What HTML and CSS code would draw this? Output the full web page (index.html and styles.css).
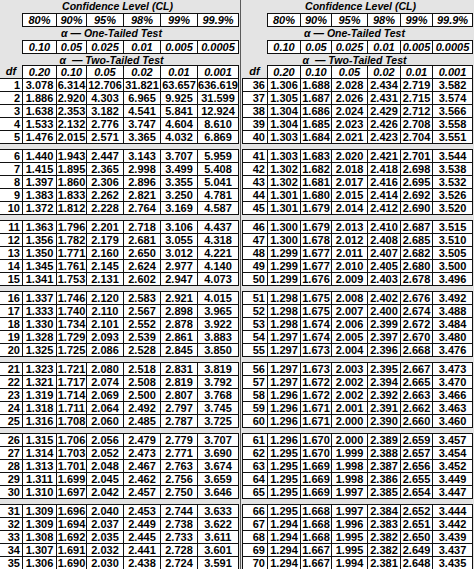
FILE: index.html
```html
<!DOCTYPE html>
<html lang="en">
<head>
<meta charset="utf-8">
<title>t-distribution table</title>
<link rel="stylesheet" href="styles.css">
</head>
<body>
<main class="sheet">
  <section class="half left">
    <div class="title cl">Confidence Level (CL)</div>
    <div class="row box"><span class="df"></span><span>80%</span><span>90%</span><span>95%</span><span>98%</span><span>99%</span><span>99.9%</span></div>
    <div class="title alpha">α — One-Tailed Test</div>
    <div class="row box"><span class="df"></span><span>0.10</span><span>0.05</span><span>0.025</span><span>0.01</span><span>0.005</span><span>0.0005</span></div>
    <div class="title alpha short">α &nbsp;— Two-Tailed Test</div>
    <div class="row head"><span class="df">df</span><span>0.20</span><span>0.10</span><span>0.05</span><span>0.02</span><span>0.01</span><span>0.001</span></div>
    <div class="group">
      <div class="row"><span class="df">1</span><span>3.078</span><span>6.314</span><span>12.706</span><span>31.821</span><span>63.657</span><span>636.619</span></div>
      <div class="row"><span class="df">2</span><span>1.886</span><span>2.920</span><span>4.303</span><span>6.965</span><span>9.925</span><span>31.599</span></div>
      <div class="row"><span class="df">3</span><span>1.638</span><span>2.353</span><span>3.182</span><span>4.541</span><span>5.841</span><span>12.924</span></div>
      <div class="row"><span class="df">4</span><span>1.533</span><span>2.132</span><span>2.776</span><span>3.747</span><span>4.604</span><span>8.610</span></div>
      <div class="row"><span class="df">5</span><span>1.476</span><span>2.015</span><span>2.571</span><span>3.365</span><span>4.032</span><span>6.869</span></div>
    </div>
    <div class="group">
      <div class="row"><span class="df">6</span><span>1.440</span><span>1.943</span><span>2.447</span><span>3.143</span><span>3.707</span><span>5.959</span></div>
      <div class="row"><span class="df">7</span><span>1.415</span><span>1.895</span><span>2.365</span><span>2.998</span><span>3.499</span><span>5.408</span></div>
      <div class="row"><span class="df">8</span><span>1.397</span><span>1.860</span><span>2.306</span><span>2.896</span><span>3.355</span><span>5.041</span></div>
      <div class="row"><span class="df">9</span><span>1.383</span><span>1.833</span><span>2.262</span><span>2.821</span><span>3.250</span><span>4.781</span></div>
      <div class="row"><span class="df">10</span><span>1.372</span><span>1.812</span><span>2.228</span><span>2.764</span><span>3.169</span><span>4.587</span></div>
    </div>
    <div class="group">
      <div class="row"><span class="df">11</span><span>1.363</span><span>1.796</span><span>2.201</span><span>2.718</span><span>3.106</span><span>4.437</span></div>
      <div class="row"><span class="df">12</span><span>1.356</span><span>1.782</span><span>2.179</span><span>2.681</span><span>3.055</span><span>4.318</span></div>
      <div class="row"><span class="df">13</span><span>1.350</span><span>1.771</span><span>2.160</span><span>2.650</span><span>3.012</span><span>4.221</span></div>
      <div class="row"><span class="df">14</span><span>1.345</span><span>1.761</span><span>2.145</span><span>2.624</span><span>2.977</span><span>4.140</span></div>
      <div class="row"><span class="df">15</span><span>1.341</span><span>1.753</span><span>2.131</span><span>2.602</span><span>2.947</span><span>4.073</span></div>
    </div>
    <div class="group">
      <div class="row"><span class="df">16</span><span>1.337</span><span>1.746</span><span>2.120</span><span>2.583</span><span>2.921</span><span>4.015</span></div>
      <div class="row"><span class="df">17</span><span>1.333</span><span>1.740</span><span>2.110</span><span>2.567</span><span>2.898</span><span>3.965</span></div>
      <div class="row"><span class="df">18</span><span>1.330</span><span>1.734</span><span>2.101</span><span>2.552</span><span>2.878</span><span>3.922</span></div>
      <div class="row"><span class="df">19</span><span>1.328</span><span>1.729</span><span>2.093</span><span>2.539</span><span>2.861</span><span>3.883</span></div>
      <div class="row"><span class="df">20</span><span>1.325</span><span>1.725</span><span>2.086</span><span>2.528</span><span>2.845</span><span>3.850</span></div>
    </div>
    <div class="group">
      <div class="row"><span class="df">21</span><span>1.323</span><span>1.721</span><span>2.080</span><span>2.518</span><span>2.831</span><span>3.819</span></div>
      <div class="row"><span class="df">22</span><span>1.321</span><span>1.717</span><span>2.074</span><span>2.508</span><span>2.819</span><span>3.792</span></div>
      <div class="row"><span class="df">23</span><span>1.319</span><span>1.714</span><span>2.069</span><span>2.500</span><span>2.807</span><span>3.768</span></div>
      <div class="row"><span class="df">24</span><span>1.318</span><span>1.711</span><span>2.064</span><span>2.492</span><span>2.797</span><span>3.745</span></div>
      <div class="row"><span class="df">25</span><span>1.316</span><span>1.708</span><span>2.060</span><span>2.485</span><span>2.787</span><span>3.725</span></div>
    </div>
    <div class="group">
      <div class="row"><span class="df">26</span><span>1.315</span><span>1.706</span><span>2.056</span><span>2.479</span><span>2.779</span><span>3.707</span></div>
      <div class="row"><span class="df">27</span><span>1.314</span><span>1.703</span><span>2.052</span><span>2.473</span><span>2.771</span><span>3.690</span></div>
      <div class="row"><span class="df">28</span><span>1.313</span><span>1.701</span><span>2.048</span><span>2.467</span><span>2.763</span><span>3.674</span></div>
      <div class="row"><span class="df">29</span><span>1.311</span><span>1.699</span><span>2.045</span><span>2.462</span><span>2.756</span><span>3.659</span></div>
      <div class="row"><span class="df">30</span><span>1.310</span><span>1.697</span><span>2.042</span><span>2.457</span><span>2.750</span><span>3.646</span></div>
    </div>
    <div class="group">
      <div class="row"><span class="df">31</span><span>1.309</span><span>1.696</span><span>2.040</span><span>2.453</span><span>2.744</span><span>3.633</span></div>
      <div class="row"><span class="df">32</span><span>1.309</span><span>1.694</span><span>2.037</span><span>2.449</span><span>2.738</span><span>3.622</span></div>
      <div class="row"><span class="df">33</span><span>1.308</span><span>1.692</span><span>2.035</span><span>2.445</span><span>2.733</span><span>3.611</span></div>
      <div class="row"><span class="df">34</span><span>1.307</span><span>1.691</span><span>2.032</span><span>2.441</span><span>2.728</span><span>3.601</span></div>
      <div class="row"><span class="df">35</span><span>1.306</span><span>1.690</span><span>2.030</span><span>2.438</span><span>2.724</span><span>3.591</span></div>
    </div>
  </section>
  <div class="divider"></div>
  <section class="half right">
    <div class="title cl">Confidence Level (CL)</div>
    <div class="row box"><span class="df"></span><span>80%</span><span>90%</span><span>95%</span><span>98%</span><span>99%</span><span>99.9%</span></div>
    <div class="title alpha">α — One-Tailed Test</div>
    <div class="row box"><span class="df"></span><span>0.10</span><span>0.05</span><span>0.025</span><span>0.01</span><span>0.005</span><span>0.0005</span></div>
    <div class="title alpha short">α &nbsp;— Two-Tailed Test</div>
    <div class="row head"><span class="df">df</span><span>0.20</span><span>0.10</span><span>0.05</span><span>0.02</span><span>0.01</span><span>0.001</span></div>
    <div class="group">
      <div class="row"><span class="df">36</span><span>1.306</span><span>1.688</span><span>2.028</span><span>2.434</span><span>2.719</span><span>3.582</span></div>
      <div class="row"><span class="df">37</span><span>1.305</span><span>1.687</span><span>2.026</span><span>2.431</span><span>2.715</span><span>3.574</span></div>
      <div class="row"><span class="df">38</span><span>1.304</span><span>1.686</span><span>2.024</span><span>2.429</span><span>2.712</span><span>3.566</span></div>
      <div class="row"><span class="df">39</span><span>1.304</span><span>1.685</span><span>2.023</span><span>2.426</span><span>2.708</span><span>3.558</span></div>
      <div class="row"><span class="df">40</span><span>1.303</span><span>1.684</span><span>2.021</span><span>2.423</span><span>2.704</span><span>3.551</span></div>
    </div>
    <div class="group">
      <div class="row"><span class="df">41</span><span>1.303</span><span>1.683</span><span>2.020</span><span>2.421</span><span>2.701</span><span>3.544</span></div>
      <div class="row"><span class="df">42</span><span>1.302</span><span>1.682</span><span>2.018</span><span>2.418</span><span>2.698</span><span>3.538</span></div>
      <div class="row"><span class="df">43</span><span>1.302</span><span>1.681</span><span>2.017</span><span>2.416</span><span>2.695</span><span>3.532</span></div>
      <div class="row"><span class="df">44</span><span>1.301</span><span>1.680</span><span>2.015</span><span>2.414</span><span>2.692</span><span>3.526</span></div>
      <div class="row"><span class="df">45</span><span>1.301</span><span>1.679</span><span>2.014</span><span>2.412</span><span>2.690</span><span>3.520</span></div>
    </div>
    <div class="group">
      <div class="row"><span class="df">46</span><span>1.300</span><span>1.679</span><span>2.013</span><span>2.410</span><span>2.687</span><span>3.515</span></div>
      <div class="row"><span class="df">47</span><span>1.300</span><span>1.678</span><span>2.012</span><span>2.408</span><span>2.685</span><span>3.510</span></div>
      <div class="row"><span class="df">48</span><span>1.299</span><span>1.677</span><span>2.011</span><span>2.407</span><span>2.682</span><span>3.505</span></div>
      <div class="row"><span class="df">49</span><span>1.299</span><span>1.677</span><span>2.010</span><span>2.405</span><span>2.680</span><span>3.500</span></div>
      <div class="row"><span class="df">50</span><span>1.299</span><span>1.676</span><span>2.009</span><span>2.403</span><span>2.678</span><span>3.496</span></div>
    </div>
    <div class="group">
      <div class="row"><span class="df">51</span><span>1.298</span><span>1.675</span><span>2.008</span><span>2.402</span><span>2.676</span><span>3.492</span></div>
      <div class="row"><span class="df">52</span><span>1.298</span><span>1.675</span><span>2.007</span><span>2.400</span><span>2.674</span><span>3.488</span></div>
      <div class="row"><span class="df">53</span><span>1.298</span><span>1.674</span><span>2.006</span><span>2.399</span><span>2.672</span><span>3.484</span></div>
      <div class="row"><span class="df">54</span><span>1.297</span><span>1.674</span><span>2.005</span><span>2.397</span><span>2.670</span><span>3.480</span></div>
      <div class="row"><span class="df">55</span><span>1.297</span><span>1.673</span><span>2.004</span><span>2.396</span><span>2.668</span><span>3.476</span></div>
    </div>
    <div class="group">
      <div class="row"><span class="df">56</span><span>1.297</span><span>1.673</span><span>2.003</span><span>2.395</span><span>2.667</span><span>3.473</span></div>
      <div class="row"><span class="df">57</span><span>1.297</span><span>1.672</span><span>2.002</span><span>2.394</span><span>2.665</span><span>3.470</span></div>
      <div class="row"><span class="df">58</span><span>1.296</span><span>1.672</span><span>2.002</span><span>2.392</span><span>2.663</span><span>3.466</span></div>
      <div class="row"><span class="df">59</span><span>1.296</span><span>1.671</span><span>2.001</span><span>2.391</span><span>2.662</span><span>3.463</span></div>
      <div class="row"><span class="df">60</span><span>1.296</span><span>1.671</span><span>2.000</span><span>2.390</span><span>2.660</span><span>3.460</span></div>
    </div>
    <div class="group">
      <div class="row"><span class="df">61</span><span>1.296</span><span>1.670</span><span>2.000</span><span>2.389</span><span>2.659</span><span>3.457</span></div>
      <div class="row"><span class="df">62</span><span>1.295</span><span>1.670</span><span>1.999</span><span>2.388</span><span>2.657</span><span>3.454</span></div>
      <div class="row"><span class="df">63</span><span>1.295</span><span>1.669</span><span>1.998</span><span>2.387</span><span>2.656</span><span>3.452</span></div>
      <div class="row"><span class="df">64</span><span>1.295</span><span>1.669</span><span>1.998</span><span>2.386</span><span>2.655</span><span>3.449</span></div>
      <div class="row"><span class="df">65</span><span>1.295</span><span>1.669</span><span>1.997</span><span>2.385</span><span>2.654</span><span>3.447</span></div>
    </div>
    <div class="group">
      <div class="row"><span class="df">66</span><span>1.295</span><span>1.668</span><span>1.997</span><span>2.384</span><span>2.652</span><span>3.444</span></div>
      <div class="row"><span class="df">67</span><span>1.294</span><span>1.668</span><span>1.996</span><span>2.383</span><span>2.651</span><span>3.442</span></div>
      <div class="row"><span class="df">68</span><span>1.294</span><span>1.668</span><span>1.995</span><span>2.382</span><span>2.650</span><span>3.439</span></div>
      <div class="row"><span class="df">69</span><span>1.294</span><span>1.667</span><span>1.995</span><span>2.382</span><span>2.649</span><span>3.437</span></div>
      <div class="row"><span class="df">70</span><span>1.294</span><span>1.667</span><span>1.994</span><span>2.381</span><span>2.648</span><span>3.435</span></div>
    </div>
  </section>
</main>
</body>
</html>
```

FILE: styles.css
```css
html, body {
  margin: 0;
  padding: 0;
  background: #e4e4e4;
}

body {
  font-family: "Liberation Sans", Arial, sans-serif;
  font-weight: bold;
  font-size: 11px;
  color: #000;
  overflow: hidden;
}

.sheet {
  display: flex;
  align-items: flex-start;
  width: 474px;
  height: 569px;
  overflow: hidden;
}

.half {
  display: flex;
  flex-direction: column;
  flex: none;
}

.left { width: 239px; }
.right { width: 231px; }

.divider {
  flex: none;
  align-self: stretch;
  width: 1px;
  margin: 0 1px;
  background: #5a5a5a;
}

.title {
  box-sizing: border-box;
  height: 13px;
  line-height: 13px;
  text-align: center;
  font-style: italic;
  font-size: 10.5px;
  white-space: nowrap;
}

.left .title.cl { padding-right: 4px; }
.right .title.cl { padding-left: 6px; }
.left .title.alpha { padding-right: 16px; }
.right .title.alpha { padding-right: 6px; }

.title.short {
  height: 11px;
  line-height: 12px;
}

.row {
  display: grid;
}

.left .row { grid-template-columns: 23px 34px 30px 37px 37px 37px 41px; }
.right .row { grid-template-columns: 26px 33px 31px 36px 33px 32px 40px; }

.row > span {
  box-sizing: border-box;
  height: 13px;
  line-height: 12px;
  text-align: center;
  white-space: nowrap;
  border-right: 1px solid #111;
  border-top: 1px solid #111;
  background: #fff;
}

.row > span.df {
  text-align: right;
  padding-right: 2px;
}

.right .group .row > span.df {
  border-left: 1px solid #111;
}

.box > span {
  height: 14px;
  border-bottom: 1px solid #111;
  font-style: italic;
}

.box > span.df,
.head > span.df {
  background: transparent;
  border-top: 0;
  border-bottom: 0;
}

.head > span {
  font-style: italic;
}

.head > span.df {
  text-align: center;
  padding-right: 0;
  line-height: 13px;
}

.group {
  border-bottom: 1px solid #111;
  margin-bottom: 5px;
}
```
